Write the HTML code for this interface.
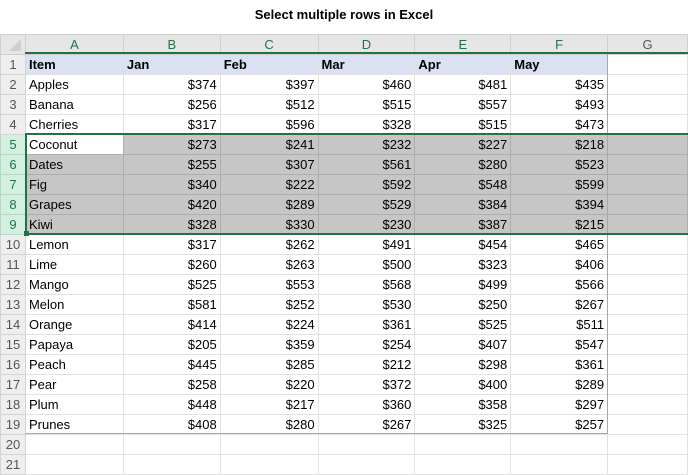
<!DOCTYPE html>
<html><head><meta charset="utf-8"><style>
*{margin:0;padding:0;box-sizing:border-box}
body{width:688px;height:474px;overflow:hidden;background:#fff;font-family:"Liberation Sans",sans-serif;position:relative}
.t{position:absolute;top:7px;left:0;width:688px;text-align:center;font-weight:bold;font-size:13px;color:#000}
table{position:absolute;top:34px;left:0;border-collapse:collapse;table-layout:fixed;font-size:13px}
td{height:20px;border:1px solid #e1e1e1;padding:0 3px;white-space:nowrap;overflow:hidden;color:#000}
td.n{background:#eeeeee;color:#555;text-align:center;padding:0;border-color:#d4d4d4;font-size:13px;font-weight:normal}
tr.h td{background:#e6e6e6;color:#217346;text-align:center;border-color:#cfcfcf}
tr.h td.g{color:#555}
td.r{text-align:right}
tr.hd td{background:#d9e1f2;font-weight:bold}
tr.hd td.n{background:#eeeeee;font-weight:normal}
tr.hd td.e{background:#fff;font-weight:normal}
tr.s td{background:#c6c6c6;border-color:#aeaeae}
tr.s td.n{background:#d3efe0;color:#217346;border-color:#b8d8c6}
tr.s td.w{background:#fff}
.gl{position:absolute;background:#217346}
</style></head><body>
<div class="t">Select multiple rows in Excel</div>
<table>
<colgroup><col style="width:25px"><col style="width:98px"><col style="width:97px"><col style="width:98px"><col style="width:97px"><col style="width:96px"><col style="width:97px"><col style="width:80px"></colgroup>
<tr class="h"><td class="n"></td><td>A</td><td>B</td><td>C</td><td>D</td><td>E</td><td>F</td><td class="g">G</td></tr>
<tr class="hd"><td class="n">1</td><td>Item</td><td>Jan</td><td>Feb</td><td>Mar</td><td>Apr</td><td>May</td><td class="e"></td></tr>
<tr><td class="n">2</td><td>Apples</td><td class="r">$374</td><td class="r">$397</td><td class="r">$460</td><td class="r">$481</td><td class="r">$435</td><td></td></tr>
<tr><td class="n">3</td><td>Banana</td><td class="r">$256</td><td class="r">$512</td><td class="r">$515</td><td class="r">$557</td><td class="r">$493</td><td></td></tr>
<tr><td class="n">4</td><td>Cherries</td><td class="r">$317</td><td class="r">$596</td><td class="r">$328</td><td class="r">$515</td><td class="r">$473</td><td></td></tr>
<tr class="s"><td class="n">5</td><td class="w">Coconut</td><td class="r">$273</td><td class="r">$241</td><td class="r">$232</td><td class="r">$227</td><td class="r">$218</td><td></td></tr>
<tr class="s"><td class="n">6</td><td>Dates</td><td class="r">$255</td><td class="r">$307</td><td class="r">$561</td><td class="r">$280</td><td class="r">$523</td><td></td></tr>
<tr class="s"><td class="n">7</td><td>Fig</td><td class="r">$340</td><td class="r">$222</td><td class="r">$592</td><td class="r">$548</td><td class="r">$599</td><td></td></tr>
<tr class="s"><td class="n">8</td><td>Grapes</td><td class="r">$420</td><td class="r">$289</td><td class="r">$529</td><td class="r">$384</td><td class="r">$394</td><td></td></tr>
<tr class="s"><td class="n">9</td><td>Kiwi</td><td class="r">$328</td><td class="r">$330</td><td class="r">$230</td><td class="r">$387</td><td class="r">$215</td><td></td></tr>
<tr><td class="n">10</td><td>Lemon</td><td class="r">$317</td><td class="r">$262</td><td class="r">$491</td><td class="r">$454</td><td class="r">$465</td><td></td></tr>
<tr><td class="n">11</td><td>Lime</td><td class="r">$260</td><td class="r">$263</td><td class="r">$500</td><td class="r">$323</td><td class="r">$406</td><td></td></tr>
<tr><td class="n">12</td><td>Mango</td><td class="r">$525</td><td class="r">$553</td><td class="r">$568</td><td class="r">$499</td><td class="r">$566</td><td></td></tr>
<tr><td class="n">13</td><td>Melon</td><td class="r">$581</td><td class="r">$252</td><td class="r">$530</td><td class="r">$250</td><td class="r">$267</td><td></td></tr>
<tr><td class="n">14</td><td>Orange</td><td class="r">$414</td><td class="r">$224</td><td class="r">$361</td><td class="r">$525</td><td class="r">$511</td><td></td></tr>
<tr><td class="n">15</td><td>Papaya</td><td class="r">$205</td><td class="r">$359</td><td class="r">$254</td><td class="r">$407</td><td class="r">$547</td><td></td></tr>
<tr><td class="n">16</td><td>Peach</td><td class="r">$445</td><td class="r">$285</td><td class="r">$212</td><td class="r">$298</td><td class="r">$361</td><td></td></tr>
<tr><td class="n">17</td><td>Pear</td><td class="r">$258</td><td class="r">$220</td><td class="r">$372</td><td class="r">$400</td><td class="r">$289</td><td></td></tr>
<tr><td class="n">18</td><td>Plum</td><td class="r">$448</td><td class="r">$217</td><td class="r">$360</td><td class="r">$358</td><td class="r">$297</td><td></td></tr>
<tr><td class="n">19</td><td>Prunes</td><td class="r">$408</td><td class="r">$280</td><td class="r">$267</td><td class="r">$325</td><td class="r">$257</td><td></td></tr>
<tr><td class="n">20</td><td></td><td></td><td></td><td></td><td></td><td></td><td></td></tr>
<tr><td class="n">21</td><td></td><td></td><td></td><td></td><td></td><td></td><td></td></tr>
</table>
<svg style="position:absolute;left:0;top:34px" width="25" height="20"><polygon points="21,5 21,17 9,17" fill="#cfcfcf"/></svg>
<div style="position:absolute;left:25px;top:433px;width:583px;height:1px;background:#8ea9db"></div>
<div style="position:absolute;left:607px;top:54px;width:1px;height:380px;background:#8ea9db"></div>
<div class="gl" style="left:25px;top:52px;width:663px;height:2px"></div>
<div class="gl" style="left:25px;top:133px;width:663px;height:2px"></div>
<div class="gl" style="left:25px;top:233px;width:663px;height:2px"></div>
<div class="gl" style="left:25px;top:133px;width:2px;height:102px"></div>
<div class="gl" style="left:24px;top:231px;width:5px;height:5px"></div>
</body></html>
